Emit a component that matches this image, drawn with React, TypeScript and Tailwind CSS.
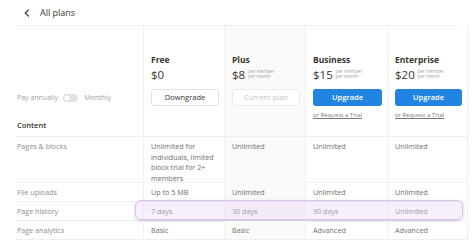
import React from "react";

const plans = [
  { name: "Free", price: "$0", per: false, btn: "Downgrade", kind: "outline", trial: false, bg: "" },
  { name: "Plus", price: "$8", per: true, btn: "Current plan", kind: "disabled", trial: false, bg: "bg-[#fafaf9]" },
  { name: "Business", price: "$15", per: true, btn: "Upgrade", kind: "primary", trial: true, bg: "" },
  { name: "Enterprise", price: "$20", per: true, btn: "Upgrade", kind: "primary", trial: true, bg: "" },
];

const rows: { label: string; vals: string[]; h: string; hl?: boolean }[] = [
  {
    label: "Pages & blocks",
    vals: ["Unlimited for individuals, limited block trial for 2+ members", "Unlimited", "Unlimited", "Unlimited"],
    h: "h-[46px]",
  },
  { label: "File uploads", vals: ["Up to 5 MB", "Unlimited", "Unlimited", "Unlimited"], h: "h-[19px]" },
  { label: "Page history", vals: ["7 days", "30 days", "90 days", "Unlimited"], h: "h-[19px]", hl: true },
  { label: "Page analytics", vals: ["Basic", "Basic", "Advanced", "Advanced"], h: "h-[19px]" },
];

const cols = "grid grid-cols-[127px_81px_81px_82px_81px]";

function cellBorder(i: number) {
  return i === 3 ? "border-l border-r border-[#f1f1ef]" : "border-l border-[#f1f1ef]";
}

export default function App() {
  return (
    <div className="w-[474px] h-[244px] bg-white overflow-hidden font-['Open_Sans',sans-serif] text-[#37352f]">
      <div className="mx-[16px] h-[26px] border-b border-[#efefed] flex items-center">
        <svg width="10" height="10" viewBox="0 0 10 10" className="ml-[6px]">
          <path d="M6.5 1.8 L3.3 5 L6.5 8.2" fill="none" stroke="#37352f" strokeWidth="1.2" strokeLinecap="round" strokeLinejoin="round" />
        </svg>
        <span className="ml-[8px] text-[9px] font-medium leading-none">All plans</span>
      </div>

      <div className="ml-[16px] w-[452px]">
        {/* header */}
        <div className={`${cols} h-[111px] border-b border-[#efefed]`}>
          <div className="pt-[67px] pl-[1px] flex flex-col">
            <div className="flex items-center h-[10px] text-[7px] text-[#a3a29f]">
              <span>Pay annually</span>
              <span className="ml-[5px] w-[15px] h-[8px] rounded-full bg-[#e3e2e0] flex items-center px-[1px]">
                <span className="w-[6px] h-[6px] rounded-full bg-white shadow-[0_0_1px_rgba(0,0,0,0.3)]" />
              </span>
              <span className="ml-[6px]">Monthly</span>
            </div>
            <div className="mt-[17px] h-[10px] leading-[10px] text-[7.5px] font-semibold text-[#37352f]">Content</div>
          </div>
          {plans.map((p, i) => (
            <div key={p.name} className={`${cellBorder(i)} ${p.bg} pt-[28px] pl-[7px] pr-[5px] flex flex-col`}>
              <div className="h-[12px] leading-[12px] text-[8.5px] font-bold">{p.name}</div>
              <div className="mt-[2px] h-[14px] flex items-center">
                <span className="text-[11.5px] leading-[14px]">{p.price}</span>
                {p.per && (
                  <span className="ml-[3px] flex flex-col text-[4.5px] leading-[5px] text-[#a3a29f] -mt-[2px]">
                    <span>per member</span>
                    <span>per month</span>
                  </span>
                )}
              </div>
              <div
                className={
                  "mt-[7px] h-[17px] rounded-[3px] flex items-center justify-center text-[7.5px] " +
                  (p.kind === "primary"
                    ? "bg-[#2383e2] text-white font-semibold"
                    : p.kind === "disabled"
                    ? "border border-[#ececea] text-[#c7c6c3] bg-white"
                    : "border border-[#e3e2e0] text-[#37352f] bg-white")
                }
              >
                {p.btn}
              </div>
              {p.trial && (
                <div className="mt-[5px] text-[6px] leading-[9px] text-[#787774] underline">or Request a Trial</div>
              )}
            </div>
          ))}
        </div>

        {rows.map((r) => (
          <div key={r.label} className={`relative ${cols} ${r.h} border-b border-[#efefed]`}>
            <div className="pl-[1px] pt-[4px] text-[7.2px] leading-[10.5px] text-[#8f8e8b]">{r.label}</div>
            {r.vals.map((v, i) => (
              <div
                key={i}
                className={`${cellBorder(i)} ${plans[i].bg} pl-[7px] pr-[5px] pt-[4px] text-[7.2px] leading-[10.5px] text-[#6f6e6a]`}
              >
                {v}
              </div>
            ))}
            {r.hl && (
              <div className="pointer-events-none absolute left-[119px] right-[5px] top-[-2px] bottom-[0px] rounded-[6px] border border-[#dcc3ee] bg-[#e9d6f7]/40 shadow-[0_1px_3px_rgba(150,100,180,0.35)]" />
            )}
          </div>
        ))}
      </div>
    </div>
  );
}
